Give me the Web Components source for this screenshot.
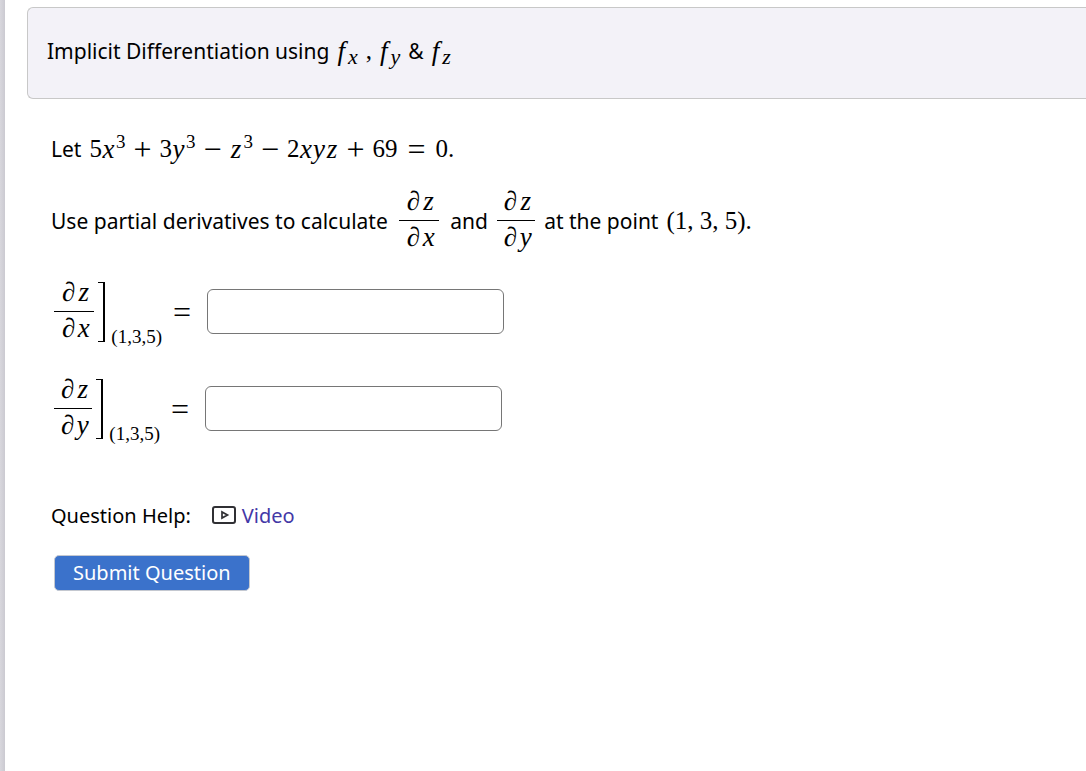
<!DOCTYPE html>
<html lang="en">
<head>
<meta charset="utf-8">
<meta name="viewport" content="width=device-width, initial-scale=1">
<title>Implicit Differentiation</title>
<style>
  body { margin: 0; background: #fff; color: #000; font: 21px/30px "Trebuchet MS", "Noto Sans", sans-serif; }
</style>
</head>
<body>
<question-page></question-page>
<script>
  const define = (name, html, setup) => {
    const template = document.createElement("template");
    template.innerHTML = html;
    customElements.define(name, class extends HTMLElement {
      constructor() {
        super();
        const root = this.attachShadow({ mode: "open" });
        root.append(template.content.cloneNode(true));
        if (setup) setup(root, this);
      }
    });
  };
  const mathFont = `font-family: "Liberation Serif", serif; font-size: 25px;`;
  const variableFont = `font-family: "Liberation Serif", serif; font-size: 27px;`;

  /* A run of upright digits and punctuation */
  define("math-num", `<style>:host { display: inline-block; ${mathFont} white-space: pre; }</style><slot></slot>`);

  /* An italic variable */
  define("math-var", `<style>:host { display: inline-block; min-width: 13px; text-align: center; ${variableFont} font-style: italic; }</style><slot></slot>`);

  /* A binary operator or relation */
  define("math-op", `<style>:host { display: inline-block; width: 18px; margin: 0 8px; text-align: center; font-family: "Liberation Serif", serif; font-size: 32px; line-height: 24px; }</style><slot></slot>`);

  /* Superscript and subscript */
  define("math-sup", `<style>:host { display: inline-block; align-self: flex-start; font-family: "Liberation Serif", serif; font-size: 19px; line-height: 16px; margin-left: 1px; }</style><slot></slot>`);
  define("math-sub", `<style>:host { display: inline-block; align-self: flex-end; font-family: "Liberation Serif", serif; font-size: 19px; line-height: 18px; }</style><slot></slot>`);

  /* Partial derivative as a stacked fraction */
  define("partial-derivative", `<style>
      :host { display: inline-flex; flex-direction: column; ${variableFont} line-height: 28px; }
      span { display: flex; justify-content: center; gap: 2px; padding: 2px 4px 2px 8px; }
      .top { padding-top: 0; padding-bottom: 6px; line-height: 26px; border-bottom: 1px solid #000; }
      :host([narrow]) span { padding-left: 7px; padding-right: 3px; }
    </style><span class="top"><span-symbol>∂</span-symbol><math-var>z</math-var></span><span><span-symbol>∂</span-symbol><slot></slot></span>`);
  define("span-symbol", `<style>:host { display: block; }</style><slot></slot>`);

  /* Partial derivative closed by a bracket, evaluated at a point */
  define("evaluated-at", `<style>
      :host { display: inline-flex; align-items: center; }
      .bracket { width: 5px; height: 58px; margin-left: 4px; border: 2px solid #000; border-width: 1px 2px 1px 0; }
      math-sub { margin: 0 0 -2px 6px; }
    </style><slot></slot><span class="bracket"></span><math-sub>(1,3,5)</math-sub>`);

  define("question-header", `<style>
      :host { display: flex; align-items: center; box-sizing: border-box; min-height: 92px; padding: 0 19px 4px; background: #f3f2f8; border: 1px solid #c8c8c8; border-right: 0; border-radius: 6px 0 0 6px; }
      h1 { display: flex; align-items: center; flex-wrap: wrap; gap: 8px; margin: 0; font: inherit; }
      .f { display: inline-flex; }
      .f math-var { min-width: 0; }
      .f math-sub { font-size: 22px; font-style: italic; margin-left: 3px; }
    </style>
    <h1><slot></slot><span class="f"><math-var>f</math-var><math-sub>x</math-sub></span><math-num>,</math-num><span class="f"><math-var>f</math-var><math-sub>y</math-sub></span>&amp;<span class="f"><math-var>f</math-var><math-sub>z</math-sub></span></h1>`);

  define("math-line", `<style>:host { display: flex; align-items: center; flex-wrap: wrap; }</style><slot></slot>`);

  /* Left side, equals sign and the answer box */
  define("answer-row", `<style>
      :host { display: block; }
      label { display: flex; align-items: center; }
      input { box-sizing: border-box; width: 297px; height: 45px; margin: 0 0 0 8px; padding: 4px 8px; font: inherit; background: #fff; border: 1px solid #767676; border-radius: 6px; }
      math-op { margin-left: 11px; }
    </style><label><slot></slot><math-op>=</math-op><input type="text"></label>`,
    (root, host) => root.querySelector("input").setAttribute("aria-label", host.getAttribute("name")));

  define("video-link", `<style>
      :host { display: inline-flex; }
      a { display: flex; align-items: center; gap: 6px; color: #4338a6; text-decoration: none; }
      svg { display: block; margin-bottom: 2px; }
    </style><a href="#video"><svg width="24" height="18" viewBox="0 0 24 18" fill="none" stroke="#303034" stroke-width="2" aria-hidden="true"><rect x="1" y="1" width="22" height="16" rx="2"/><path d="M10 6v6l5.500-3z" stroke-width="1.700"/></svg><slot></slot></a>`);

  define("submit-button", `<style>
      :host { display: block; font-size: 20px; }
      button { height: 36px; padding: 0 18px; border: 1px solid #c4c8d0; border-radius: 5px; background: #3b72cb; color: #fff; font: inherit; line-height: 34px; }
    </style><button type="submit"><slot></slot></button>`);

  define("question-page", `<style>
      :host { display: block; box-sizing: border-box; min-height: 100vh; padding: 7px 0 24px 27px; background: linear-gradient(90deg, #d8d7dd 0, #cbcad1 5px, #fff 5px); overflow: hidden; }
      main { padding: 0 24px; }
      .equation { margin-top: 35px; }
      .equation .let, .task .gap { margin-right: 8px; }
      .equation .relation { margin: 0 10px; }
      .task { margin-top: 24px; }
      .task partial-derivative { margin: 0 11px; }
      .task partial-derivative[narrow] { margin: 0 9px; }
      .term { display: inline-flex; }
      .answers { display: grid; gap: 32px; margin: 26px 0 0 3px; }
      .help { display: flex; align-items: center; gap: 21px; margin-top: 60px; font-size: 20px; }
      submit-button { margin: 24px 0 0 3px; }
    </style>
    <question-header>Implicit Differentiation using</question-header>
    <main>
      <math-line class="equation"><span class="let">Let</span><span class="term"><math-num>5</math-num><math-var>x</math-var><math-sup>3</math-sup></span><math-op>+</math-op><span class="term"><math-num>3</math-num><math-var>y</math-var><math-sup>3</math-sup></span><math-op>−</math-op><span class="term"><math-var>z</math-var><math-sup>3</math-sup></span><math-op>−</math-op><math-num>2</math-num><math-var>x</math-var><math-var>y</math-var><math-var>z</math-var><math-op>+</math-op><math-num>69</math-num><math-op class="relation">=</math-op><math-num>0.</math-num></math-line>
      <math-line class="task">Use partial derivatives to calculate<partial-derivative><math-var>x</math-var></partial-derivative>and<partial-derivative narrow><math-var>y</math-var></partial-derivative><span class="gap">at the point</span><math-num>(1, 3, 5).</math-num></math-line>
      <div class="answers">
        <answer-row name="Partial derivative of z by x at (1,3,5)"><evaluated-at><partial-derivative><math-var>x</math-var></partial-derivative></evaluated-at></answer-row>
        <answer-row name="Partial derivative of z by y at (1,3,5)"><evaluated-at><partial-derivative narrow><math-var>y</math-var></partial-derivative></evaluated-at></answer-row>
      </div>
      <div class="help"><span>Question Help:</span><video-link>Video</video-link></div>
      <submit-button>Submit Question</submit-button>
    </main>`);
</script>
</body>
</html>
